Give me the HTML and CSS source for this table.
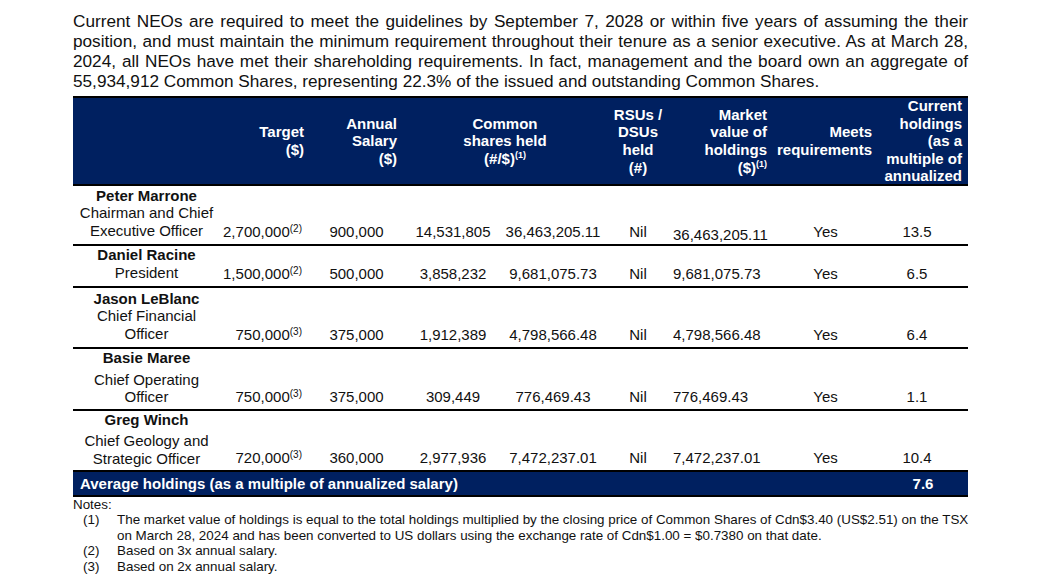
FILE: index.html
```html
<!DOCTYPE html>
<html lang="en">
<head>
<meta charset="utf-8">
<title>NEO Shareholding Requirements</title>
<link rel="stylesheet" href="styles.css">
</head>
<body>
<div class="page">
  <p class="intro">
    <span class="jl">Current NEOs are required to meet the guidelines by September 7, 2028 or within five years of assuming the their</span>
    <span class="jl">position, and must maintain the minimum requirement throughout their tenure as a senior executive. As at March 28,</span>
    <span class="jl">2024, all NEOs have met their shareholding requirements. In fact, management and the board own an aggregate of</span>
    <span class="ll">55,934,912 Common Shares, representing 22.3% of the issued and outstanding Common Shares.</span>
  </p>

  <table class="holdings">
    <colgroup>
      <col class="w-name"><col class="w-tgt"><col class="w-sal"><col class="w-num"><col class="w-amt"><col class="w-rsu"><col class="w-mv"><col class="w-meet"><col class="w-cur">
    </colgroup>
    <thead>
      <tr>
        <th></th>
        <th class="r">Target<br>($)</th>
        <th class="r">Annual<br>Salary<br>($)</th>
        <th class="ctr" colspan="2">Common<br>shares held<br>(#/$)<sup>(1)</sup></th>
        <th class="ctr">RSUs /<br>DSUs<br>held<br>(#)</th>
        <th class="r">Market<br>value of<br>holdings<br>($)<sup>(1)</sup></th>
        <th class="r">Meets<br>requirements</th>
        <th class="r"><div class="clip">Current<br>holdings<br>(as a<br>multiple of<br>annualized</div></th>
      </tr>
    </thead>
    <tbody>
      <tr class="h58">
        <td class="name up"><b>Peter Marrone</b><br>Chairman and Chief<br>Executive Officer</td>
        <td class="tgt">2,700,000<sup>(2)</sup></td>
        <td class="c">900,000</td>
        <td class="num">14,531,805</td>
        <td class="amt">36,463,205.11</td>
        <td class="c">Nil</td>
        <td class="mv low">36,463,205.11</td>
        <td class="c">Yes</td>
        <td class="cur">13.5</td>
      </tr>
      <tr class="h40">
        <td class="name up"><b>Daniel Racine</b><br>President</td>
        <td class="tgt">1,500,000<sup>(2)</sup></td>
        <td class="c">500,000</td>
        <td class="num">3,858,232</td>
        <td class="amt">9,681,075.73</td>
        <td class="c">Nil</td>
        <td class="mv">9,681,075.73</td>
        <td class="c">Yes</td>
        <td class="cur">6.5</td>
      </tr>
      <tr class="h59">
        <td class="name up"><b>Jason LeBlanc</b><br>Chief Financial<br>Officer</td>
        <td class="tgt">750,000<sup>(3)</sup></td>
        <td class="c">375,000</td>
        <td class="num">1,912,389</td>
        <td class="amt">4,798,566.48</td>
        <td class="c">Nil</td>
        <td class="mv">4,798,566.48</td>
        <td class="c">Yes</td>
        <td class="cur">6.4</td>
      </tr>
      <tr class="h58">
        <td class="name"><b class="gap">Basie Maree</b>Chief Operating<br>Officer</td>
        <td class="tgt">750,000<sup>(3)</sup></td>
        <td class="c">375,000</td>
        <td class="num">309,449</td>
        <td class="amt">776,469.43</td>
        <td class="c">Nil</td>
        <td class="mv">776,469.43</td>
        <td class="c">Yes</td>
        <td class="cur">1.1</td>
      </tr>
      <tr class="h58">
        <td class="name"><b class="gap">Greg Winch</b>Chief Geology and<br>Strategic Officer</td>
        <td class="tgt">720,000<sup>(3)</sup></td>
        <td class="c">360,000</td>
        <td class="num">2,977,936</td>
        <td class="amt">7,472,237.01</td>
        <td class="c">Nil</td>
        <td class="mv">7,472,237.01</td>
        <td class="c">Yes</td>
        <td class="cur">10.4</td>
      </tr>
      <tr class="avg">
        <td colspan="8">Average holdings (as a multiple of annualized salary)</td>
        <td class="avg-val">7.6</td>
      </tr>
    </tbody>
  </table>

  <div class="notes">
    <div class="notes-title">Notes:</div>
    <div class="note"><span class="nn">(1)</span><span class="nt">The market value of holdings is equal to the total holdings multiplied by the closing price of Common Shares of Cdn$3.40 (US$2.51) on the TSX<br>on March 28, 2024 and has been converted to US dollars using the exchange rate of Cdn$1.00 = $0.7380 on that date.</span></div>
    <div class="note"><span class="nn">(2)</span><span class="nt">Based on 3x annual salary.</span></div>
    <div class="note"><span class="nn">(3)</span><span class="nt">Based on 2x annual salary.</span></div>
  </div>
</div>
</body>
</html>
```

FILE: styles.css
```css
* { box-sizing: border-box; }

html, body {
  margin: 0;
  padding: 0;
  background: #ffffff;
}

body {
  font-family: "Liberation Sans", Arial, sans-serif;
  color: #111111;
}

.page {
  width: 895px;
  margin-left: 73px;
  padding-top: 11px;
}

.intro {
  margin: 0 0 5px 0;
  font-size: 17.2px;
  line-height: 20px;
}

.intro .jl {
  display: block;
  text-align: justify;
  text-align-last: justify;
}

.intro .ll {
  display: block;
  text-align: left;
}

/* table */
.holdings {
  width: 895px;
  border-collapse: collapse;
  table-layout: fixed;
  font-size: 15px;
}

.w-name { width: 147px; }
.w-tgt  { width: 90px; }
.w-sal  { width: 93px; }
.w-num  { width: 92px; }
.w-amt  { width: 112px; }
.w-rsu  { width: 62px; }
.w-mv   { width: 104px; }
.w-meet { width: 105px; }
.w-cur  { width: 90px; }

.holdings thead th {
  background: #002060;
  color: #ffffff;
  font-weight: bold;
  font-size: 15px;
  line-height: 17.6px;
  height: 88px;
  padding: 0 6px 0 0;
  vertical-align: middle;
  border-top: 2px solid #000000;
  border-bottom: 2px solid #000000;
}

.holdings thead th.r { text-align: right; }
.holdings thead th.ctr { text-align: center; padding: 0; }

.holdings thead .clip {
  height: 88px;
  margin: -1px 0 -1px 0;
}

.holdings sup {
  font-size: 10px;
  line-height: 0;
  vertical-align: 5px;
}

.holdings thead sup {
  font-size: 9px;
  vertical-align: 6px;
}

.holdings tbody td {
  line-height: 18px;
  padding: 0 0 3px 0;
  vertical-align: bottom;
  border-bottom: 2px solid #000000;
  color: #111111;
  white-space: nowrap;
}

.h58 { height: 60px; }
.h40 { height: 42px; }
.h59 { height: 61px; }

.holdings td.name {
  text-align: center;
  line-height: 17.5px;
}

.holdings td.name.up {
  padding-bottom: 5px;
}

.holdings td.name b {
  font-weight: bold;
}

.holdings td.name b.gap {
  display: block;
  margin-bottom: 4px;
}

.holdings td.tgt { text-align: right; padding-right: 8px; }
.holdings td.c { text-align: center; }
.holdings td.num { text-align: center; padding-left: 8px; }
.holdings td.amt { text-align: center; padding-left: 4px; }
.holdings td.mv { text-align: left; padding-left: 4px; }
.holdings td.low { padding-bottom: 0; }
.holdings td.cur { text-align: center; padding-right: 12px; }

.holdings tr.avg td {
  background: #002060;
  color: #ffffff;
  font-weight: bold;
  height: 25px;
  line-height: 22px;
  padding: 0 0 0 7px;
  vertical-align: middle;
  border-bottom: 2px solid #000000;
}

.holdings tr.avg td.avg-val {
  text-align: center;
  padding: 0;
}

/* notes */
.notes {
  font-size: 13.4px;
  line-height: 15.4px;
}

.note {
  display: flex;
}

.nn {
  width: 44px;
  flex: none;
  padding-left: 10px;
}

.nt {
  white-space: nowrap;
}
```
